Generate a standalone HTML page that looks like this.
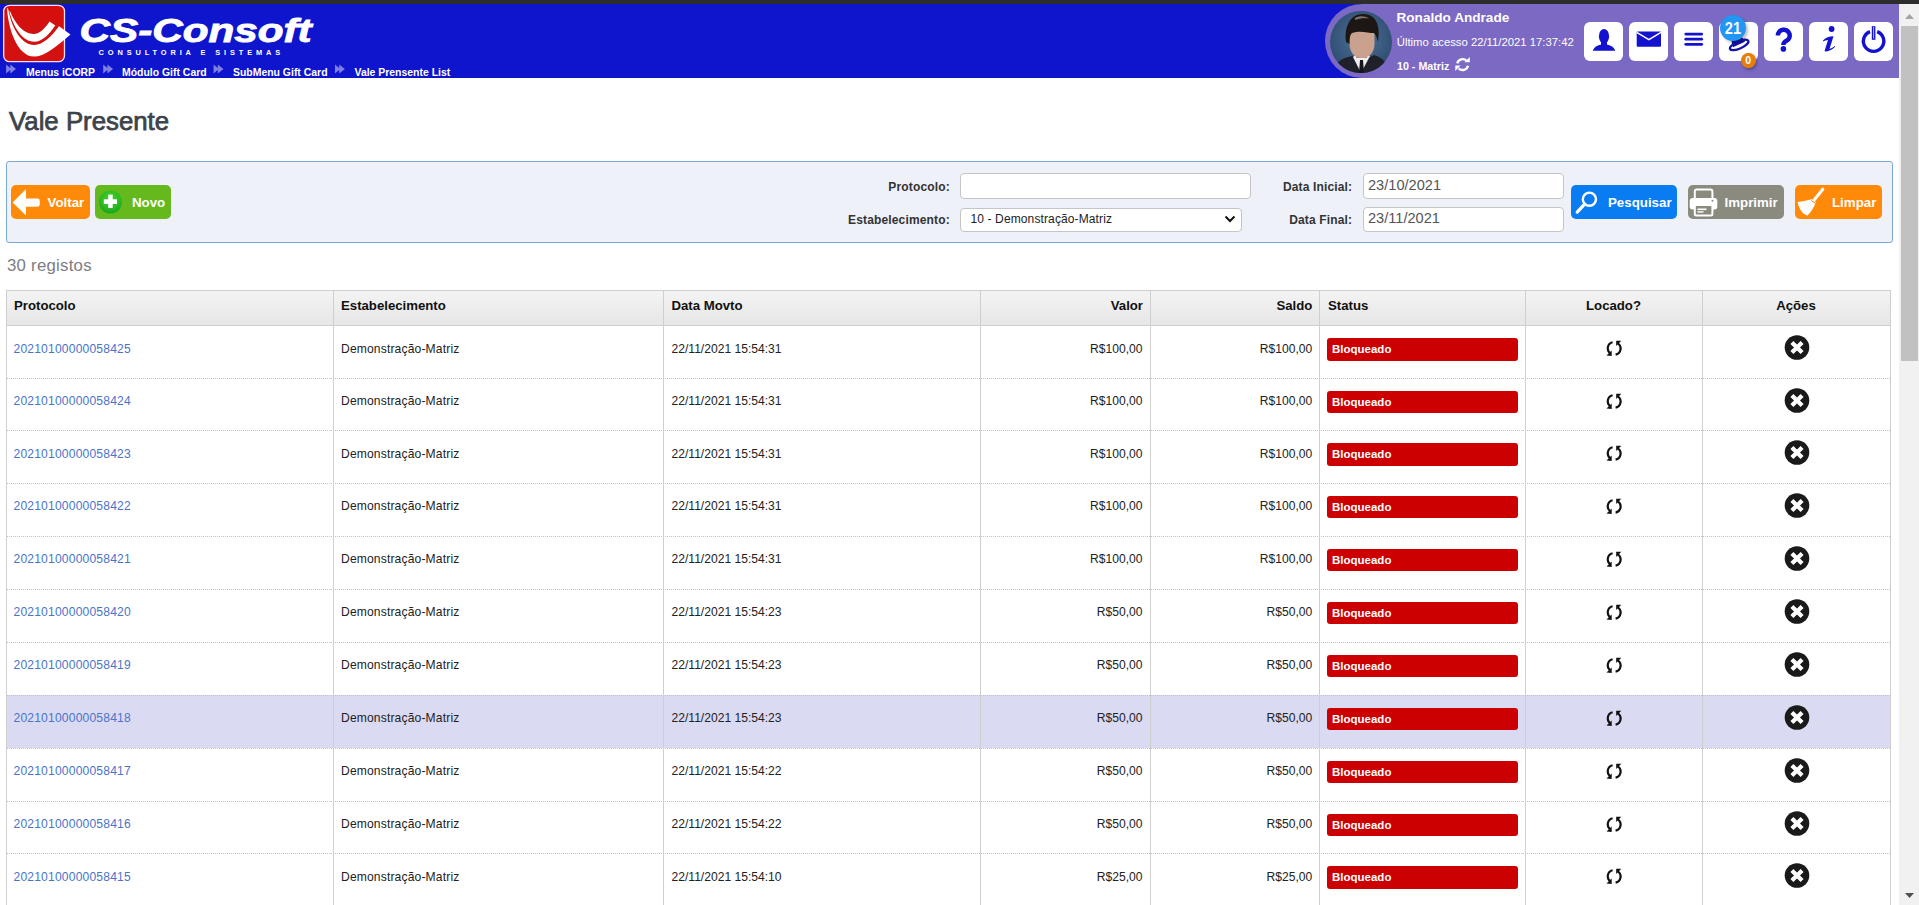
<!DOCTYPE html>
<html><head><meta charset="utf-8"><title>Vale Presente</title>
<style>
html,body{margin:0;padding:0;}
body{width:1919px;height:905px;overflow:hidden;position:relative;background:#fff;font-family:"Liberation Sans",sans-serif;}
.topbar{position:absolute;left:0;top:0;width:1919px;height:4px;background:#2d2d2d;}
.hdr{position:absolute;left:0;top:4px;width:1899px;height:74px;background:#0f15cc;}
.logo{position:absolute;left:3px;top:5px;}
.bc{position:absolute;top:0;left:0;}
.bct{position:absolute;font:bold 10.45px "Liberation Sans",sans-serif;color:#fff;line-height:0;white-space:nowrap;}
.bca{position:absolute;}
.user{position:absolute;left:1325px;top:4px;width:574px;height:74px;background:#7c69c3;border-radius:37px 0 0 37px;}
.av{position:absolute;left:1330px;top:11px;width:62px;height:62px;border-radius:50%;overflow:hidden;}
.un{position:absolute;left:1397px;color:#fff;line-height:0;white-space:nowrap;}
.ib{position:absolute;top:22px;width:39px;height:39px;background:#fff;border-radius:6px;}
.ib svg{position:absolute;left:0;top:0;}
.title{position:absolute;left:9px;top:0;font:25.8px "Liberation Sans",sans-serif;-webkit-text-stroke:0.75px #3d434a;color:#3d434a;line-height:0;white-space:nowrap;}
.panel{position:absolute;left:6px;top:161px;width:1885px;height:80px;background:#eef2f8;border:1px solid #7aaad4;border-radius:3px;}
.btn{position:absolute;top:185px;height:33.5px;border-radius:5px;}
.btn .bt{position:absolute;font:bold 13.3px "Liberation Sans",sans-serif;color:#fff;line-height:0;top:17px;white-space:nowrap;}
.lbl{position:absolute;font:bold 12px "Liberation Sans",sans-serif;letter-spacing:0.15px;color:#333;line-height:0;white-space:nowrap;text-align:right;}
.inp{position:absolute;background:#fff;border:1px solid #c5c5c5;border-radius:4px;box-sizing:border-box;}
.inp .v{position:absolute;line-height:0;white-space:nowrap;}
.reg{position:absolute;left:7px;font:16.8px "Liberation Sans",sans-serif;letter-spacing:0.25px;color:#7d7d82;line-height:0;white-space:nowrap;}
.tbl{position:absolute;left:0;top:0;width:1919px;height:905px;}
.thead{position:absolute;left:6px;width:1884px;background:linear-gradient(#f4f4f4,#e6e6e6);}
.hl{position:absolute;left:6px;width:1884px;background:#dbdaf3;}
.dot{position:absolute;left:7px;width:1883px;height:0;border-top:1px dotted #c2c2c2;}
.vl{position:absolute;top:290px;width:1px;height:620px;background:#cfcfcf;}
.hlne{position:absolute;left:6px;width:1885px;height:1px;background:#cfcfcf;}
.th{position:absolute;font:bold 13.2px "Liberation Sans",sans-serif;color:#111;line-height:0;white-space:nowrap;}
.th.c{text-align:center;}
.td{position:absolute;font:12.1px "Liberation Sans",sans-serif;color:#222;line-height:0;white-space:nowrap;}
.td.lnk{color:#4a74c9;letter-spacing:0.18px;}
.r{text-align:right;}
.badge{position:absolute;left:1327px;width:191px;height:22.5px;background:#cc0000;border-radius:3px;}
.badge span{position:absolute;left:5px;top:10.9px;font:bold 11.5px "Liberation Sans",sans-serif;color:#fff;line-height:0;white-space:nowrap;}
.rf{position:absolute;left:1605px;}
.xc{position:absolute;left:1783.5px;}
.sb{position:absolute;left:1899px;top:4px;width:20px;height:901px;background:#f1f1f1;}
.thumb{position:absolute;left:1901px;top:26px;width:17px;height:335px;background:#c1c1c1;}

.un,.v,.bt,.lbl,.th,.td,.reg,.title,.bct,.lh0{line-height:0 !important;}
.td.dm{letter-spacing:0.15px;}

</style></head><body>

<svg width="0" height="0" style="position:absolute">
<defs>
<symbol id="ico-rf" viewBox="0 0 18 17">
  <path d="M7.6,2.2 A6.2,6.2 0 0 0 5.64,13.48" fill="none" stroke="#111" stroke-width="2.2"/>
  <path d="M1.5,15.6 L6.7,15.9 L6.7,10.6 Z" fill="#111"/>
  <path d="M10.6,14.6 A6.2,6.2 0 0 0 12.76,3.32" fill="none" stroke="#111" stroke-width="2.2"/>
  <path d="M16.3,0.8 L11.2,0.7 L11.2,6.1 Z" fill="#111"/>
</symbol>
<symbol id="ico-x" viewBox="0 0 26 26">
  <circle cx="13" cy="12.5" r="12.3" fill="#1a1a1a"/>
  <path d="M7.9,7.4 L18.1,17.6 M18.1,7.4 L7.9,17.6" stroke="#fff" stroke-width="4.2"/>
</symbol>
</defs></svg>
<div class="topbar"></div>
<div class="hdr"></div>
<svg style="position:absolute;left:0;top:0" width="460" height="80" viewBox="0 0 460 80">
  <defs>
    <linearGradient id="lg" x1="0" y1="0" x2="0" y2="1">
      <stop offset="0" stop-color="#d80e0a"/>
      <stop offset="0.5" stop-color="#cf1212"/>
      <stop offset="1" stop-color="#d61010"/>
    </linearGradient>
  </defs>
  <rect x="3.7" y="5.3" width="60.8" height="56.4" rx="6" fill="url(#lg)" stroke="#ffe0ea" stroke-width="1.3"/>
  <path d="M7,7.7 C8,28 17,56.6 34.2,56.6 C44,56.6 56,47 70.5,34.5 L59,26.2 C52,36 43,44.9 34.2,44.9 C22,44.9 12,30 8.2,9 Z" fill="#fff"/>
  <path d="M10,11 C15,24 24,34 33.5,34 C40,34 45,28 49.6,21.5 L55.3,25.5 C50,33 43,41.8 34.2,41.8 C22,41.8 13,26 9.4,11.5 Z" fill="#fff"/>
  <text x="79.6" y="42.3" font-family="Liberation Sans" font-weight="bold" font-style="italic" font-size="34" fill="#fff" stroke="#fff" stroke-width="0.9" textLength="232" lengthAdjust="spacingAndGlyphs">CS-Consoft</text>
  <text x="98.6" y="55.1" font-family="Liberation Sans" font-weight="bold" font-size="7.4" fill="#fff" textLength="181.6" lengthAdjust="spacing">CONSULTORIA E SISTEMAS</text>
  <g fill="#7f7fe4">
    <path d="M6.1,64.4 L11.4,68.9 L6.1,73.4 Z M10.3,64.4 L16.0,68.9 L10.3,73.4 Z"/>
    <path d="M103.2,64.4 L108.5,68.9 L103.2,73.4 Z M107.4,64.4 L113.1,68.9 L107.4,73.4 Z"/>
    <path d="M213.6,64.4 L218.9,68.9 L213.6,73.4 Z M217.8,64.4 L223.5,68.9 L217.8,73.4 Z"/>
    <path d="M335.0,64.4 L340.3,68.9 L335.0,73.4 Z M339.2,64.4 L344.9,68.9 L339.2,73.4 Z"/>
  </g>
  <g font-family="Liberation Sans" font-weight="bold" font-size="10.45" fill="#fff">
    <text x="26" y="75.75">Menus iCORP</text>
    <text x="122" y="75.75">Módulo Gift Card</text>
    <text x="233" y="75.75">SubMenu Gift Card</text>
    <text x="354.5" y="75.75">Vale Prensente List</text>
  </g>
</svg>
<div class="user"></div>
<svg style="position:absolute;left:1330px;top:11px" width="62" height="62" viewBox="0 0 62 62">
  <defs>
    <clipPath id="avc"><circle cx="31" cy="31" r="31"/></clipPath>
    <radialGradient id="avbg" cx="0.5" cy="0.45" r="0.6">
      <stop offset="0" stop-color="#4f7298"/>
      <stop offset="1" stop-color="#2c4a6e"/>
    </radialGradient>
  </defs>
  <g clip-path="url(#avc)">
    <rect width="62" height="62" fill="url(#avbg)"/>
    <path d="M2,62 C4,52 12,47 22,45 L32,50 L44,44 C52,46 58,52 60,62 Z" fill="#20202a"/>
    <path d="M23,46 L31,62 L40,45 L36,43 L27,43 Z" fill="#eeeeee"/>
    <path d="M30,49 L33,49 L34,62 L29,62 Z" fill="#15151c"/>
    <rect x="26" y="38" width="11" height="9" fill="#b38a78"/>
    <path d="M19.5,23 C19.5,19 44.5,19 44.5,23 L44.5,33 C44.5,42 38.5,47 32,47 C25.5,47 19.5,42 19.5,33 Z" fill="#c9a18e"/>
    <path d="M16,31 C14,16 20,3 33,3 C45,3 51,13 48,31 C47,27 46,24 44,22 C38,22 30,19 22,22 C20,24 19.5,27 19.5,33 Z" fill="#1c1614"/>
    <path d="M25,7 C29,4.5 35,4.5 39,7.5 C35,6.8 30,7 25,9 Z" fill="#7a726e"/>
  </g>
</svg>
<div class="un" style="left:1396.5px;top:18.1px;font:bold 13.6px 'Liberation Sans',sans-serif;">Ronaldo Andrade</div>
<div class="un" style="left:1396.8px;top:41.7px;font:11.3px 'Liberation Sans',sans-serif;">Último acesso 22/11/2021 17:37:42</div>
<div class="un" style="top:66px;font:bold 10.7px 'Liberation Sans',sans-serif;">10 - Matriz</div>
<svg style="position:absolute;left:1455px;top:57px" width="16" height="15" viewBox="0 0 16 15">
  <path d="M2.2,6.4 A5.6,5.6 0 0 1 11.6,3.8" fill="none" stroke="#fff" stroke-width="2.4"/>
  <path d="M14.8,0 L14.8,5.3 L9.5,5.3 Z" fill="#fff"/>
  <path d="M13,8.8 A5.6,5.6 0 0 1 3.6,11.4" fill="none" stroke="#fff" stroke-width="2.4"/>
  <path d="M0.3,14 L0.3,8.6 L5.6,8.6 Z" fill="#fff"/>
</svg>
<div class="ib" style="left:1584px">
  <svg width="39" height="39" viewBox="0 0 39 39"><g fill="#1313cf">
    <ellipse cx="20" cy="14.3" rx="5.1" ry="7.4"/>
    <rect x="17" y="18" width="6" height="6"/>
    <path d="M8.8,28.8 C10,24.5 15,22.6 20,22.6 C25,22.6 30,24.5 31.2,28.8 Z"/>
  </g></svg>
</div>
<div class="ib" style="left:1629px">
  <svg width="39" height="39" viewBox="0 0 39 39">
    <rect x="7.7" y="9.5" width="24.3" height="15.3" rx="1" fill="#1313cf"/>
    <path d="M7.7,10.3 L19.9,17.6 L32,10.3" fill="none" stroke="#fff" stroke-width="1.4"/>
  </svg>
</div>
<div class="ib" style="left:1674px">
  <svg width="39" height="39" viewBox="0 0 39 39"><g stroke="#1313cf" stroke-width="2.8" stroke-linecap="round">
    <line x1="11.8" y1="12.1" x2="27.7" y2="12.1"/>
    <line x1="11.8" y1="17.2" x2="27.7" y2="17.2"/>
    <line x1="11.8" y1="22.3" x2="27.7" y2="22.3"/>
  </g></svg>
</div>
<div class="ib" style="left:1719px">
  <svg width="39" height="39" viewBox="0 0 39 39">
    <g transform="rotate(-24 20 22.5)">
      <path d="M13.5,22.5 C13.5,16 16.5,12.5 20,12.5 C23.5,12.5 26.5,16 26.5,22.5 Z" fill="#1313a8"/>
      <ellipse cx="20" cy="23" rx="10" ry="3.6" fill="none" stroke="#1313a8" stroke-width="2.3"/>
    </g>
  </svg>
</div>
<div style="position:absolute;left:1719.5px;top:14.7px;width:26px;height:26px;border-radius:50%;background:#2196f3;box-shadow:2px 2px 3px rgba(0,0,0,0.25);"></div>
<div style="position:absolute;left:1719.5px;top:28.6px;width:26px;text-align:center;font:bold 17px 'Liberation Sans',sans-serif;color:#fff;line-height:0;transform:scaleX(0.86);">21</div>
<div style="position:absolute;left:1741px;top:52.5px;width:14.5px;height:15.5px;border-radius:50%;background:#e67e0e;box-shadow:1px 2px 3px rgba(0,0,0,0.3);"></div>
<div style="position:absolute;left:1741px;top:60.2px;width:14.5px;text-align:center;font:bold 10.5px 'Liberation Sans',sans-serif;color:#fff;line-height:0;">0</div>
<div class="ib" style="left:1764px">
  <svg width="39" height="39" viewBox="0 0 39 39">
    <path d="M13.9,13.6 A5.9,5.9 0 1 1 22.5,18.8 C20.6,19.9 19.4,20.8 19.4,22.6 L19.4,23" fill="none" stroke="#1313cf" stroke-width="4.5"/><circle cx="19.4" cy="26.9" r="2.8" fill="#1313cf"/>
  </svg>
</div>
<div class="ib" style="left:1809px">
  <svg width="39" height="39" viewBox="0 0 39 39"><g fill="#1313cf">
    <circle cx="22.6" cy="7" r="2.9"/>
    <path d="M14,18.5 C17,15.5 20,14.5 24.5,14.3 L20.5,27 C22,26.5 23.5,25.8 25.8,24 L26,25 C22,28.5 19,29.6 16.5,29.6 C15.5,29.6 15.6,28.8 16,27.5 L19,18 C17,18.3 15.5,18.8 14.3,19.5 Z"/>
  </g></svg>
</div>
<div class="ib" style="left:1854px">
  <svg width="39" height="39" viewBox="0 0 39 39">
    <path d="M16,9.6 A10.2,10.2 0 1 0 23.2,9.6" fill="none" stroke="#1313cf" stroke-width="3.4"/>
    <line x1="19.6" y1="4.2" x2="19.6" y2="17.8" stroke="#1313cf" stroke-width="3.6"/>
    <line x1="19.6" y1="5" x2="19.6" y2="16.5" stroke="#a8b4f0" stroke-width="1"/>
  </svg>
</div>

<div class="title" style="top:120.9px">Vale Presente</div>
<div class="panel"></div>
<div class="btn" style="left:11px;width:79px;background:#ff8a0a;">
  <svg style="position:absolute;left:0;top:0" width="40" height="34" viewBox="0 0 40 34">
    <path d="M1.7,17.4 L15,4.1 L15,13.6 L26.3,13.6 C28.3,13.6 28.8,14.6 28.8,17.5 C28.8,20.4 28.3,21.8 26.3,21.8 L15,21.8 L15,30.6 Z" fill="#fff"/>
  </svg>
  <div class="bt" style="left:36.5px;top:17.5px">Voltar</div>
</div>
<div class="btn" style="left:95px;width:76px;background:#66b91c;">
  <svg style="position:absolute;left:0;top:0" width="40" height="34" viewBox="0 0 40 34">
    <defs><radialGradient id="ng" cx="0.5" cy="0.35" r="0.6"><stop offset="0" stop-color="#46d21e"/><stop offset="0.75" stop-color="#2cb824"/><stop offset="1" stop-color="#1ea820"/></radialGradient></defs>
    <circle cx="15.5" cy="17" r="11.5" fill="url(#ng)"/>
    <rect x="8.8" y="14.3" width="13.2" height="4.7" fill="#fff"/>
    <rect x="13.2" y="9.6" width="4.5" height="13.3" fill="#fff"/>
  </svg>
  <div class="bt" style="left:37px;top:17.5px">Novo</div>
</div>
<div class="lbl" style="right:969.2px;top:186.6px">Protocolo:</div>
<div class="lbl" style="right:969.2px;top:219.6px">Estabelecimento:</div>
<div class="inp" style="left:960px;top:173px;width:290.5px;height:25.5px"></div>
<div class="inp" style="left:960px;top:207.5px;width:281.5px;height:24px">
  <div class="v" style="left:9.5px;top:10.2px;font:12px 'Liberation Sans',sans-serif;letter-spacing:0.12px;color:#222;">10 - Demonstração-Matriz</div>
  <svg style="position:absolute;left:263px;top:6.8px" width="12" height="8" viewBox="0 0 12 8"><path d="M1.5,1.5 L6,6 L10.5,1.5" fill="none" stroke="#111" stroke-width="2"/></svg>
</div>
<div class="lbl" style="right:566.8px;top:186.6px">Data Inicial:</div>
<div class="lbl" style="right:566.8px;top:219.6px">Data Final:</div>
<div class="inp" style="left:1363px;top:173px;width:200.5px;height:25.5px">
  <div class="v" style="left:4px;top:10.8px;font:14.6px 'Liberation Sans',sans-serif;color:#555;">23/10/2021</div>
</div>
<div class="inp" style="left:1363px;top:207px;width:200.5px;height:24.7px">
  <div class="v" style="left:4px;top:10.0px;font:14.6px 'Liberation Sans',sans-serif;color:#555;">23/11/2021</div>
</div>
<div class="btn" style="left:1571px;width:105.7px;background:#0a7cf2;">
  <svg style="position:absolute;left:0;top:0" width="36" height="34" viewBox="0 0 36 34">
    <circle cx="18.4" cy="14.2" r="6.6" fill="none" stroke="#fff" stroke-width="2.4"/>
    <line x1="13.6" y1="19.2" x2="6.2" y2="27.2" stroke="#fff" stroke-width="3.2" stroke-linecap="round"/>
  </svg>
  <div class="bt" style="left:37px;top:17.5px">Pesquisar</div>
</div>
<div class="btn" style="left:1688px;width:95.8px;background:#8a8a7e;">
  <svg style="position:absolute;left:0;top:0" width="34" height="34" viewBox="0 0 34 34">
    <rect x="6.8" y="4.6" width="17.6" height="10.4" rx="2" fill="none" stroke="#fff" stroke-width="2"/>
    <rect x="1.7" y="13" width="27.6" height="11.5" rx="3" fill="#fff"/>
    <rect x="6.8" y="20" width="17.6" height="10.6" rx="1.5" fill="#8a8a7e" stroke="#fff" stroke-width="2"/>
    <rect x="9.5" y="23.5" width="9" height="1.6" fill="#fff"/>
    <rect x="9.5" y="26.2" width="6" height="1.4" fill="#fff"/>
    <circle cx="24.5" cy="15.8" r="1" fill="#8a8a7e"/>
  </svg>
  <div class="bt" style="left:36.5px;top:17.5px">Imprimir</div>
</div>
<div class="btn" style="left:1795px;width:86.8px;background:#ff8a0a;">
  <svg style="position:absolute;left:0;top:0" width="36" height="34" viewBox="0 0 36 34">
    <line x1="27.8" y1="4.2" x2="19.5" y2="14.5" stroke="#fff" stroke-width="3" stroke-linecap="round"/>
    <path d="M2.5,17 C7.5,16.2 13,15.3 17,14 L21,17.2 C19,22.5 16,27 12.5,30.5 C8,29.5 4.5,25 2.5,17 Z" fill="#fff"/>
    <line x1="16.2" y1="15.6" x2="21" y2="18.6" stroke="#ff8a0a" stroke-width="1"/>
  </svg>
  <div class="bt" style="left:37px;top:17.5px">Limpar</div>
</div>
<div class="reg" style="top:266.3px">30 registos</div>

<div class="tbl">
<div class="thead" style="top:290.0px;height:35.4px"></div>
<div class="hl" style="top:695px;height:53px"></div>
<div class="dot" style="top:378px"></div>
<div class="dot" style="top:430px"></div>
<div class="dot" style="top:483px"></div>
<div class="dot" style="top:536px"></div>
<div class="dot" style="top:589px"></div>
<div class="dot" style="top:642px"></div>
<div class="dot" style="top:695px"></div>
<div class="dot" style="top:748px"></div>
<div class="dot" style="top:801px"></div>
<div class="dot" style="top:853px"></div>
<div class="dot" style="top:906px"></div>
<div class="vl" style="left:6px"></div>
<div class="vl" style="left:333px"></div>
<div class="vl" style="left:663px"></div>
<div class="vl" style="left:980px"></div>
<div class="vl" style="left:1150px"></div>
<div class="vl" style="left:1319px"></div>
<div class="vl" style="left:1525px"></div>
<div class="vl" style="left:1702px"></div>
<div class="vl" style="left:1890px"></div>
<div class="hlne" style="top:290px"></div>
<div class="hlne" style="top:325px"></div>
<div class="th" style="left:14.0px;top:306.23px">Protocolo</div>
<div class="th" style="left:341.0px;top:306.23px">Estabelecimento</div>
<div class="th" style="left:671.5px;top:306.23px">Data Movto</div>
<div class="th r" style="right:776.0px;top:306.23px">Valor</div>
<div class="th r" style="right:606.7px;top:306.23px">Saldo</div>
<div class="th" style="left:1328.0px;top:306.23px">Status</div>
<div class="th c" style="left:1525px;width:177px;top:306.23px">Locado?</div>
<div class="th c" style="left:1702px;width:188px;top:306.23px">Ações</div>
<div class="td lnk" style="left:13.5px;top:348.71px">20210100000058425</div>
<div class="td dm" style="left:341.0px;top:348.71px">Demonstração-Matriz</div>
<div class="td" style="left:671.5px;top:348.71px">22/11/2021 15:54:31</div>
<div class="td r" style="right:776.5px;top:348.71px">R$100,00</div>
<div class="td r" style="right:606.7px;top:348.71px">R$100,00</div>
<div class="badge" style="top:338.20px"><span>Bloqueado</span></div>
<svg class="rf" style="top:340.00px" width="18" height="17" viewBox="0 0 18 17"><use href="#ico-rf"/></svg>
<svg class="xc" style="top:335.00px" width="26" height="26" viewBox="0 0 26 26"><use href="#ico-x"/></svg>
<div class="td lnk" style="left:13.5px;top:401.31px">20210100000058424</div>
<div class="td dm" style="left:341.0px;top:401.31px">Demonstração-Matriz</div>
<div class="td" style="left:671.5px;top:401.31px">22/11/2021 15:54:31</div>
<div class="td r" style="right:776.5px;top:401.31px">R$100,00</div>
<div class="td r" style="right:606.7px;top:401.31px">R$100,00</div>
<div class="badge" style="top:390.80px"><span>Bloqueado</span></div>
<svg class="rf" style="top:392.60px" width="18" height="17" viewBox="0 0 18 17"><use href="#ico-rf"/></svg>
<svg class="xc" style="top:387.60px" width="26" height="26" viewBox="0 0 26 26"><use href="#ico-x"/></svg>
<div class="td lnk" style="left:13.5px;top:453.81px">20210100000058423</div>
<div class="td dm" style="left:341.0px;top:453.81px">Demonstração-Matriz</div>
<div class="td" style="left:671.5px;top:453.81px">22/11/2021 15:54:31</div>
<div class="td r" style="right:776.5px;top:453.81px">R$100,00</div>
<div class="td r" style="right:606.7px;top:453.81px">R$100,00</div>
<div class="badge" style="top:443.30px"><span>Bloqueado</span></div>
<svg class="rf" style="top:445.10px" width="18" height="17" viewBox="0 0 18 17"><use href="#ico-rf"/></svg>
<svg class="xc" style="top:440.10px" width="26" height="26" viewBox="0 0 26 26"><use href="#ico-x"/></svg>
<div class="td lnk" style="left:13.5px;top:506.31px">20210100000058422</div>
<div class="td dm" style="left:341.0px;top:506.31px">Demonstração-Matriz</div>
<div class="td" style="left:671.5px;top:506.31px">22/11/2021 15:54:31</div>
<div class="td r" style="right:776.5px;top:506.31px">R$100,00</div>
<div class="td r" style="right:606.7px;top:506.31px">R$100,00</div>
<div class="badge" style="top:495.80px"><span>Bloqueado</span></div>
<svg class="rf" style="top:497.60px" width="18" height="17" viewBox="0 0 18 17"><use href="#ico-rf"/></svg>
<svg class="xc" style="top:492.60px" width="26" height="26" viewBox="0 0 26 26"><use href="#ico-x"/></svg>
<div class="td lnk" style="left:13.5px;top:559.31px">20210100000058421</div>
<div class="td dm" style="left:341.0px;top:559.31px">Demonstração-Matriz</div>
<div class="td" style="left:671.5px;top:559.31px">22/11/2021 15:54:31</div>
<div class="td r" style="right:776.5px;top:559.31px">R$100,00</div>
<div class="td r" style="right:606.7px;top:559.31px">R$100,00</div>
<div class="badge" style="top:548.80px"><span>Bloqueado</span></div>
<svg class="rf" style="top:550.60px" width="18" height="17" viewBox="0 0 18 17"><use href="#ico-rf"/></svg>
<svg class="xc" style="top:545.60px" width="26" height="26" viewBox="0 0 26 26"><use href="#ico-x"/></svg>
<div class="td lnk" style="left:13.5px;top:612.31px">20210100000058420</div>
<div class="td dm" style="left:341.0px;top:612.31px">Demonstração-Matriz</div>
<div class="td" style="left:671.5px;top:612.31px">22/11/2021 15:54:23</div>
<div class="td r" style="right:776.5px;top:612.31px">R$50,00</div>
<div class="td r" style="right:606.7px;top:612.31px">R$50,00</div>
<div class="badge" style="top:601.80px"><span>Bloqueado</span></div>
<svg class="rf" style="top:603.60px" width="18" height="17" viewBox="0 0 18 17"><use href="#ico-rf"/></svg>
<svg class="xc" style="top:598.60px" width="26" height="26" viewBox="0 0 26 26"><use href="#ico-x"/></svg>
<div class="td lnk" style="left:13.5px;top:665.31px">20210100000058419</div>
<div class="td dm" style="left:341.0px;top:665.31px">Demonstração-Matriz</div>
<div class="td" style="left:671.5px;top:665.31px">22/11/2021 15:54:23</div>
<div class="td r" style="right:776.5px;top:665.31px">R$50,00</div>
<div class="td r" style="right:606.7px;top:665.31px">R$50,00</div>
<div class="badge" style="top:654.80px"><span>Bloqueado</span></div>
<svg class="rf" style="top:656.60px" width="18" height="17" viewBox="0 0 18 17"><use href="#ico-rf"/></svg>
<svg class="xc" style="top:651.60px" width="26" height="26" viewBox="0 0 26 26"><use href="#ico-x"/></svg>
<div class="td lnk" style="left:13.5px;top:718.31px">20210100000058418</div>
<div class="td dm" style="left:341.0px;top:718.31px">Demonstração-Matriz</div>
<div class="td" style="left:671.5px;top:718.31px">22/11/2021 15:54:23</div>
<div class="td r" style="right:776.5px;top:718.31px">R$50,00</div>
<div class="td r" style="right:606.7px;top:718.31px">R$50,00</div>
<div class="badge" style="top:707.80px"><span>Bloqueado</span></div>
<svg class="rf" style="top:709.60px" width="18" height="17" viewBox="0 0 18 17"><use href="#ico-rf"/></svg>
<svg class="xc" style="top:704.60px" width="26" height="26" viewBox="0 0 26 26"><use href="#ico-x"/></svg>
<div class="td lnk" style="left:13.5px;top:771.31px">20210100000058417</div>
<div class="td dm" style="left:341.0px;top:771.31px">Demonstração-Matriz</div>
<div class="td" style="left:671.5px;top:771.31px">22/11/2021 15:54:22</div>
<div class="td r" style="right:776.5px;top:771.31px">R$50,00</div>
<div class="td r" style="right:606.7px;top:771.31px">R$50,00</div>
<div class="badge" style="top:760.80px"><span>Bloqueado</span></div>
<svg class="rf" style="top:762.60px" width="18" height="17" viewBox="0 0 18 17"><use href="#ico-rf"/></svg>
<svg class="xc" style="top:757.60px" width="26" height="26" viewBox="0 0 26 26"><use href="#ico-x"/></svg>
<div class="td lnk" style="left:13.5px;top:824.31px">20210100000058416</div>
<div class="td dm" style="left:341.0px;top:824.31px">Demonstração-Matriz</div>
<div class="td" style="left:671.5px;top:824.31px">22/11/2021 15:54:22</div>
<div class="td r" style="right:776.5px;top:824.31px">R$50,00</div>
<div class="td r" style="right:606.7px;top:824.31px">R$50,00</div>
<div class="badge" style="top:813.80px"><span>Bloqueado</span></div>
<svg class="rf" style="top:815.60px" width="18" height="17" viewBox="0 0 18 17"><use href="#ico-rf"/></svg>
<svg class="xc" style="top:810.60px" width="26" height="26" viewBox="0 0 26 26"><use href="#ico-x"/></svg>
<div class="td lnk" style="left:13.5px;top:876.81px">20210100000058415</div>
<div class="td dm" style="left:341.0px;top:876.81px">Demonstração-Matriz</div>
<div class="td" style="left:671.5px;top:876.81px">22/11/2021 15:54:10</div>
<div class="td r" style="right:776.5px;top:876.81px">R$25,00</div>
<div class="td r" style="right:606.7px;top:876.81px">R$25,00</div>
<div class="badge" style="top:866.30px"><span>Bloqueado</span></div>
<svg class="rf" style="top:868.10px" width="18" height="17" viewBox="0 0 18 17"><use href="#ico-rf"/></svg>
<svg class="xc" style="top:863.10px" width="26" height="26" viewBox="0 0 26 26"><use href="#ico-x"/></svg>
</div>
<div class="sb"></div>
<div class="thumb"></div>
<svg style="position:absolute;left:1899px;top:4px" width="20" height="20" viewBox="0 0 20 20"><path d="M6,15 L10.5,10 L15,15 Z" fill="#a3a3a3"/></svg>
<svg style="position:absolute;left:1899px;top:885px" width="20" height="20" viewBox="0 0 20 20"><path d="M6,8 L10.5,13 L15,8 Z" fill="#505050"/></svg>


</body></html>
